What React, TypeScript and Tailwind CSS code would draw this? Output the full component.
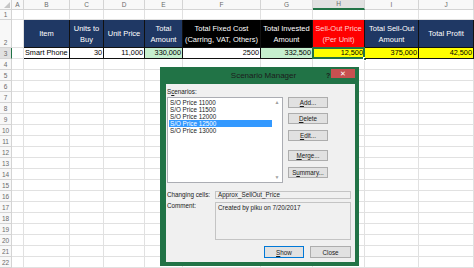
import React from "react";

type Col = { key: string; w: number };

const cols: Col[] = [
  { key: "A", w: 12 },
  { key: "B", w: 46 },
  { key: "C", w: 34 },
  { key: "D", w: 41 },
  { key: "E", w: 38 },
  { key: "F", w: 78 },
  { key: "G", w: 52 },
  { key: "H", w: 52 },
  { key: "I", w: 54 },
  { key: "J", w: 55 },
];

const headers: { text: string[]; bg: string; fg: string }[] = [
  { text: ["Item"], bg: "bg-[#1f3864]", fg: "text-white" },
  { text: ["Units to", "Buy"], bg: "bg-[#1f3864]", fg: "text-white" },
  { text: ["Unit Price"], bg: "bg-[#1f3864]", fg: "text-white" },
  { text: ["Total", "Amount"], bg: "bg-[#1f3864]", fg: "text-white" },
  { text: ["Total Fixed Cost", "(Carring, VAT, Others)"], bg: "bg-black", fg: "text-white" },
  { text: ["Total Invested", "Amount"], bg: "bg-black", fg: "text-white" },
  { text: ["Sell-Out Price", "(Per Unit)"], bg: "bg-[#ff0000]", fg: "text-[#ffd0d0]" },
  { text: ["Total Sell-Out", "Amount"], bg: "bg-[#1f3864]", fg: "text-white" },
  { text: ["Total Profit"], bg: "bg-[#1f3864]", fg: "text-white" },
];

const values: { text: string; bg: string; align: string }[] = [
  { text: "Smart Phone", bg: "bg-white", align: "justify-start" },
  { text: "30", bg: "bg-white", align: "justify-end" },
  { text: "11,000", bg: "bg-white", align: "justify-end" },
  { text: "330,000", bg: "bg-[#c6efce]", align: "justify-end" },
  { text: "2500", bg: "bg-white", align: "justify-end" },
  { text: "332,500", bg: "bg-[#c6efce]", align: "justify-end" },
  { text: "12,500", bg: "bg-[#ffff00]", align: "justify-end" },
  { text: "375,000", bg: "bg-[#ffff00]", align: "justify-end" },
  { text: "42,500", bg: "bg-[#ffff00]", align: "justify-end" },
];

const RowNum: React.FC<{ n: number; h: number; active?: boolean }> = ({ n, h, active }) => (
  <div
    className={`w-[12px] shrink-0 flex items-end justify-center border-b border-r border-[#d4d4d4] text-[6.5px] leading-[9px] text-[#6b6b6b] ${
      active ? "bg-[#e1e1e1] border-r-[#217346]" : "bg-[#f8f8f8]"
    }`}
    style={{ height: h }}
  >
    {n}
  </div>
);

const EmptyRow: React.FC<{ n: number; h: number }> = ({ n, h }) => (
  <div className="flex">
    <RowNum n={n} h={h} />
    {cols.map((c) => (
      <div key={c.key} className="shrink-0 border-b border-r border-[#e1e1e1] bg-white" style={{ width: c.w, height: h }} />
    ))}
  </div>
);

const Btn: React.FC<{ u: string; rest: string; pre?: string; w?: string; def?: boolean }> = ({ u, rest, pre, w, def }) => (
  <div
    className={`${w ?? "w-[40px] h-[11px]"} flex items-center justify-center bg-[#e1e1e1] border ${
      def ? "border-[#0078d7]" : "border-[#adadad]"
    } text-[6.3px] text-[#1a1a1a]`}
  >
    {pre}
    <span className="underline">{u}</span>
    {rest}
  </div>
);

const scenarios = ["S/O Price 11000", "S/O Price 11500", "S/O Price 12000", "S/O Price 12500", "S/O Price 13000"];

const ScenarioDialog: React.FC = () => (
  <div className="absolute left-[160px] top-[67px] w-[199px] h-[199px] bg-[#217346] flex flex-col pl-[6px] pr-[4px] pb-[4px] font-['Liberation_Sans',sans-serif]">
    <div className="h-[17px] shrink-0 relative flex items-center justify-center">
      <span className="text-[8px] text-[#1c1c1c] pl-[6px]">Scenario Manager</span>
      <span className="absolute left-[160px] top-[4px] text-[7px] font-bold text-[#1c1c1c]">?</span>
      <div className="absolute left-[165px] top-[2px] w-[24px] h-[9px] bg-[#c75050] flex items-center justify-center text-white text-[7px] leading-none">
        ✕
      </div>
    </div>
    <div className="flex-1 bg-[#f0f0f0] flex flex-col pl-[1px] pr-[4px] pt-[3px] text-[6.3px] text-[#1a1a1a]">
      <div className="h-[10px] leading-[10px]">
        S<span className="underline">c</span>enarios:
      </div>
      <div className="flex gap-[5px]">
        <div className="w-[116px] h-[86px] bg-white border border-[#abadb3] flex">
          <div className="flex-1 flex flex-col pt-[1px] pl-[1px]">
            {scenarios.map((s, i) => (
              <div
                key={s}
                className={`h-[7px] leading-[7px] pl-[1px] ${i === 3 ? "bg-[#3399ff] text-white" : ""}`}
              >
                {s}
              </div>
            ))}
          </div>
          <div className="w-[10px] flex flex-col items-center justify-between py-[2px] text-[#a0a0a0] text-[5px] leading-none">
            <span>▲</span>
            <span>▼</span>
          </div>
        </div>
        <div className="flex flex-col">
          <Btn u="A" rest="dd..." />
          <div className="mt-[5px]">
            <Btn u="D" rest="elete" />
          </div>
          <div className="mt-[6px]">
            <Btn u="E" rest="dit..." />
          </div>
          <div className="mt-[9px]">
            <Btn u="M" rest="erge..." />
          </div>
          <div className="mt-[6px]">
            <Btn pre="S" u="u" rest="mmary..." />
          </div>
        </div>
      </div>
      <div className="flex mt-[7px] items-center">
        <div className="w-[48px]">Changing cells:</div>
        <div className="w-[136px] h-[8px] border border-[#c4c4c4] bg-[#f0f0f0] flex items-center pl-[2px] leading-none">
          Approx_SellOut_Price
        </div>
      </div>
      <div className="flex mt-[3px]">
        <div className="w-[48px] leading-[8px]">Comment:</div>
        <div className="w-[136px] h-[38px] border border-[#c4c4c4] bg-[#f0f0f0] pl-[2px] pt-[1px] leading-[8px]">
          Created by piku on 7/20/2017
        </div>
      </div>
      <div className="flex justify-end gap-[6px] mt-[6px]">
        <Btn u="S" rest="how" def w="w-[40px] h-[12px]" />
        <Btn u="" rest="Close" w="w-[41px] h-[12px]" />
      </div>
    </div>
  </div>
);

export default function App() {
  const rowsAfter = Array.from({ length: 19 }, (_, i) => i + 4);
  return (
    <div className="relative w-[474px] h-[268px] overflow-hidden bg-white font-['Liberation_Sans',sans-serif]">
      {/* column letters */}
      <div className="flex h-[10px]">
        <div className="w-[12px] shrink-0 bg-[#f8f8f8] border-b border-r border-[#d4d4d4] relative">
          <div className="absolute right-[1px] bottom-[1px] w-0 h-0 border-l-[6px] border-l-transparent border-b-[6px] border-b-[#c6c6c6]" />
        </div>
        {cols.map((c) => (
          <div
            key={c.key}
            className={`shrink-0 flex items-center justify-center text-[6.5px] text-[#6b6b6b] border-r border-[#d4d4d4] ${
              c.key === "H" ? "bg-[#e1e1e1] border-b-2 border-b-[#217346]" : "bg-[#f8f8f8] border-b border-b-[#d4d4d4]"
            }`}
            style={{ width: c.w }}
          >
            {c.key}
          </div>
        ))}
      </div>
      <EmptyRow n={1} h={10} />
      {/* row 2: headers */}
      <div className="flex">
        <RowNum n={2} h={28} />
        <div className="w-[12px] h-[28px] shrink-0 border-r border-b border-[#e1e1e1]" />
        {headers.map((h, i) => (
          <div
            key={i}
            className={`shrink-0 h-[28px] flex flex-col items-center justify-center border-r border-b border-[#111] ${h.bg} ${h.fg} text-[7.5px] leading-[11px]`}
            style={{ width: cols[i + 1].w }}
          >
            {h.text.map((t) => (
              <span key={t} className="whitespace-nowrap">
                {t}
              </span>
            ))}
          </div>
        ))}
      </div>
      {/* row 3: values */}
      <div className="flex">
        <RowNum n={3} h={11} active />
        <div className="w-[12px] h-[11px] shrink-0 border-r border-b border-[#e1e1e1]" />
        {values.map((v, i) => (
          <div
            key={i}
            className={`relative shrink-0 h-[11px] flex items-center px-[1px] whitespace-nowrap border-r border-b border-[#111] ${v.bg} ${v.align} text-[7.3px] text-black`}
            style={{ width: cols[i + 1].w }}
          >
            {v.text}
            {i === 6 && (
              <>
                <div className="absolute -left-[1px] -top-[1px] -right-[1px] -bottom-[1px] border-2 border-[#217346] pointer-events-none" />
                <div className="absolute -right-[3px] -bottom-[3px] w-[4px] h-[4px] bg-[#217346] border border-white" />
              </>
            )}
          </div>
        ))}
      </div>
      {rowsAfter.map((n) => (
        <EmptyRow key={n} n={n} h={11} />
      ))}
      <ScenarioDialog />
    </div>
  );
}
